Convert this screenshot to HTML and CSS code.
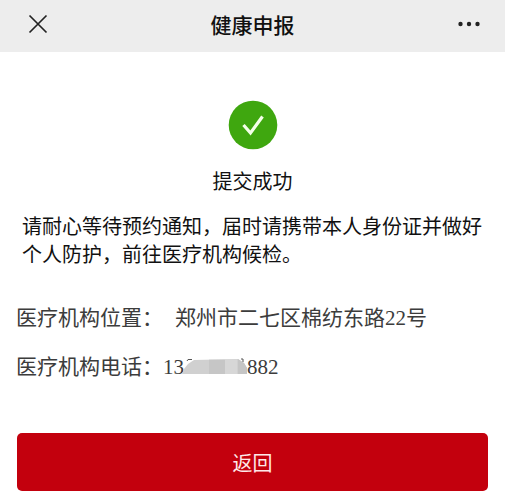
FILE: index.html
```html
<!DOCTYPE html>
<html lang="zh-CN">
<head>
    <meta charset="UTF-8">
    <meta name="viewport" content="width=device-width, initial-scale=1.0">
    <title>健康申报</title>
    <link rel="stylesheet" href="styles.css">
</head>
<body>
    <header class="navbar">
        <button type="button" class="nav-btn" aria-label="关闭">
            <svg width="20" height="20" viewBox="0 0 20 20">
                <path d="M1.5 1.5 L18.5 18.5 M18.5 1.5 L1.5 18.5" fill="none" stroke="#222" stroke-width="1.7" />
            </svg>
        </button>
        <h1>健康申报</h1>
        <button type="button" class="nav-btn" aria-label="更多">
            <svg width="24" height="20" viewBox="0 0 24 20">
                <g fill="#222">
                    <circle cx="3.5" cy="10" r="2.2" />
                    <circle cx="12" cy="10" r="2.2" />
                    <circle cx="20.5" cy="10" r="2.2" />
                </g>
            </svg>
        </button>
    </header>
    <main>
        <div class="result">
            <svg width="50" height="50" viewBox="0 0 50 50">
                <circle cx="25" cy="25" r="24.3" fill="#3fa70f" />
                <path d="M15.5 25 L22.5 33 L34.5 16.5" fill="none" stroke="#f4ffe9" stroke-width="3.2" />
            </svg>
            <h2>提交成功</h2>
        </div>
        <p class="message">请耐心等待预约通知，届时请携带本人身份证并做好个人防护，前往医疗机构候检。</p>
        <dl class="info">
            <div class="row">
                <dt>医疗机构位置：</dt>
                <dd class="address">郑州市二七区棉纺东路22号</dd>
            </div>
            <div class="row">
                <dt>医疗机构电话：</dt>
                <!-- middle digits are hidden -->
                <dd>13<svg class="mask" width="63" height="15" viewBox="0 0 63 15">
                    <path d="M-2 15 L0 10 L4 5 L10 1 L54 0 L60 4 L63 9 L63 15 Z" fill="#d0d0d0" />
                    <path d="M25 0.7 H41 V15 H25 Z" fill="#c6c6c6" />
                    <path d="M41 0.4 H53 V15 H41 Z" fill="#d7d7d7" />
                    <path d="M54 0 L60 4 L63 9 V15 H54 Z" fill="#c5c5c5" />
                    <path d="M3 2 L4 0.5 L8 0.5 M57 0 L59 0 L59 3" fill="none" stroke="#555" />
                </svg>882</dd>
            </div>
        </dl>
        <button type="button" class="back">返回</button>
    </main>
</body>
</html>
```

FILE: styles.css
```css
body {
    margin: 0;
    background: #fff;
    color: #111;
    font-family: "Noto Sans CJK SC", sans-serif;
    font-size: 20px;
}

h1, h2, p, dl, dd {
    margin: 0;
}

button {
    border: 0;
    font: inherit;
}

svg {
    display: block;
}

.navbar {
    display: flex;
    align-items: center;
    justify-content: space-between;
    padding: 8px 24px 12px 28px;
    background: #ededed;
}
.navbar h1 {
    font-size: 21px;
    font-weight: 500;
    line-height: 32px;
}
.nav-btn {
    padding: 0;
    background: none;
}

.result {
    display: flex;
    flex-direction: column;
    align-items: center;
    padding-top: 48px;
}
.result h2 {
    margin-top: 16px;
    font-size: 20px;
    font-weight: 400;
    line-height: 30px;
}

.message {
    padding: 16px 22px 0;
    line-height: 28px;
}

.info {
    padding: 36px 16px 0;
    color: #3c3c3c;
    font-family: "Liberation Serif", "Noto Sans CJK SC", serif;
    font-size: 21px;
    line-height: 28px;
}
.row {
    display: flex;
    margin-bottom: 21px;
}
.row .address {
    padding-left: 12px;
}
.mask {
    display: inline-block;
    overflow: visible;
    vertical-align: baseline;
}

.back {
    display: block;
    width: calc(100% - 34px);
    height: 58px;
    margin: 52px auto 10px;
    border-radius: 5px;
    background: #c3000d;
    color: #ffe9e9;
}
```
